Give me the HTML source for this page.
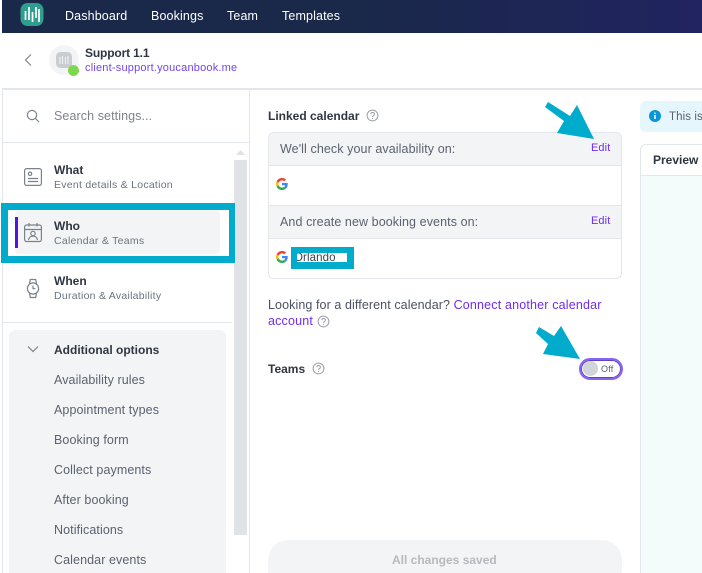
<!DOCTYPE html>
<html><head><meta charset="utf-8"><style>
html,body{margin:0;padding:0;background:#fff}
#p{position:relative;width:702px;height:573px;overflow:hidden;background:#fff;font-family:"Liberation Sans",sans-serif;color:#374151}
#p div,#p svg,#p span.a{position:absolute}
.t{white-space:nowrap;line-height:16px;font-size:12.5px;letter-spacing:.09px;transform:translateY(-8px)}
.b{font-weight:bold;font-size:12px;color:#2f3642;letter-spacing:0}
.s{font-size:10.5px;color:#6b7280;letter-spacing:.26px}
.o{color:#5b6270}
.l{color:#6f2df0;letter-spacing:.17px}
.n{color:#fff;font-size:12.5px;letter-spacing:.13px}
</style></head><body><div id="p">
<div style="left:2px;top:0;width:700px;height:33px;background:linear-gradient(90deg,#1a2849 0%,#1a2849 50%,#212460 100%)"></div>
<svg style="left:20px;top:3px" width="24" height="24" viewBox="0 0 24 24"><rect x="0.500" y="0" width="23" height="23" rx="7" fill="#2f9e8f"/><path d="M5.500 8v9M9 4v13M12.500 9v10M16 4v11M19 6v13" stroke="#fff" stroke-width="1.700" fill="none"/></svg>
<div class="t n" style="left:65px;top:16px">Dashboard</div>
<div class="t n" style="left:151px;top:16px">Bookings</div>
<div class="t n" style="left:227px;top:16px">Team</div>
<div class="t n" style="left:282px;top:16px">Templates</div>

<svg style="left:22px;top:52px" width="12" height="16" viewBox="0 0 12 16"><path d="M9 2.500L3.500 8L9 13.500" stroke="#80868f" stroke-width="1.200" fill="none"/></svg>
<div style="left:49px;top:45px;width:30px;height:30px;border-radius:50%;background:#f3f4f6"></div>
<svg style="left:56px;top:52px" width="16" height="16" viewBox="0 0 16 16"><rect width="16" height="16" rx="4.500" fill="#c9ccd0"/><path d="M4 5v7M6.500 4v8M9.500 5v7M12 4v8" stroke="#eceef0" stroke-width="1.200"/></svg>
<div style="left:68px;top:65px;width:11px;height:11px;border-radius:50%;background:#7ed84f"></div>
<div class="t b" style="left:85px;top:53px;letter-spacing:-.15px">Support 1.1</div>
<div class="t l" style="left:85px;top:68px;font-size:11px;letter-spacing:.2px;color:#7444ee">client-support.youcanbook.me</div>

<div style="left:2px;top:88px;width:700px;height:2px;background:#e3e6ea"></div>
<div style="left:2px;top:89px;width:1px;height:484px;background:#e3e6ea"></div>
<div style="left:249px;top:89px;width:1px;height:484px;background:#e3e6ea"></div>
<svg style="left:26px;top:109px" width="14" height="14" viewBox="0 0 14 14"><circle cx="6" cy="6" r="4.600" stroke="#7b828c" stroke-width="1.200" fill="none"/><path d="M9.500 9.500L13 13" stroke="#7b828c" stroke-width="1.200"/></svg>
<div class="t" style="left:54px;top:116px;color:#7e848d">Search settings...</div>
<div style="left:3px;top:142px;width:246px;height:1px;background:#e3e6ea"></div>

<div style="left:234px;top:160px;width:13px;height:375px;background:#dfe3e7"></div>
<svg style="left:236px;top:150px" width="9" height="5"><path d="M0 5L4.500 0L9 5Z" fill="#dfe3e7"/></svg>

<svg style="left:23px;top:167px" width="20" height="20" viewBox="0 0 20 20" fill="none" stroke="#7b828c" stroke-width="1.200"><rect x="1.600" y="1.600" width="16.800" height="16.800" rx="2"/><circle cx="7" cy="6.800" r="1.700"/><path d="M5 11.500h10M5 14.500h10"/></svg>
<div class="t b" style="left:54px;top:170px">What</div>
<div class="t s" style="left:54px;top:185px">Event details &amp; Location</div>

<div style="left:1px;top:203px;width:234px;height:60px;background:#00abcb"></div>
<div style="left:8px;top:210px;width:221px;height:46px;background:#fff"></div>
<div style="left:15px;top:211px;width:205px;height:43px;background:#f3f4f6;border-radius:4px"></div>
<div style="left:15px;top:217px;width:3px;height:31px;background:#4f14e8"></div>
<svg style="left:23px;top:222px" width="20" height="22" viewBox="0 0 20 22" fill="none" stroke="#7b828c" stroke-width="1.200"><rect x="1.600" y="3" width="16.800" height="16.500" rx="2"/><path d="M1.600 7.500h16.800M6 1v3.500M14 1v3.500"/><circle cx="10" cy="11.500" r="2.200"/><path d="M5.500 18c.5-3 2-3.800 4.500-3.800s4 .8 4.500 3.800"/></svg>
<div class="t b" style="left:54px;top:226px">Who</div>
<div class="t s" style="left:54px;top:241px">Calendar &amp; Teams</div>

<svg style="left:25px;top:278px" width="16" height="21" viewBox="0 0 16 21" fill="none" stroke="#7b828c" stroke-width="1.200"><circle cx="8" cy="10.500" r="5.600"/><path d="M8 7.500v3.200h2.400M4.500 5.500L5.300 1.500h5.400l.8 4M4.500 15.500l.8 4h5.400l.8-4"/></svg>
<div class="t b" style="left:54px;top:281px">When</div>
<div class="t s" style="left:54px;top:296px">Duration &amp; Availability</div>
<div style="left:3px;top:322px;width:229px;height:1px;background:#e3e6ea"></div>

<div style="left:9px;top:330px;width:217px;height:250px;background:#f3f4f6;border-radius:6px"></div>
<svg style="left:26px;top:345px" width="14" height="9" viewBox="0 0 14 9"><path d="M2 1.500L7 6.500L12 1.500" stroke="#7b828c" stroke-width="1.200" fill="none"/></svg>
<div class="t b" style="left:54px;top:350px">Additional options</div>
<div class="t o" style="left:54px;top:380px">Availability rules</div>
<div class="t o" style="left:54px;top:410px">Appointment types</div>
<div class="t o" style="left:54px;top:440px">Booking form</div>
<div class="t o" style="left:54px;top:470px">Collect payments</div>
<div class="t o" style="left:54px;top:500px">After booking</div>
<div class="t o" style="left:54px;top:530px">Notifications</div>
<div class="t o" style="left:54px;top:560px">Calendar events</div>

<div class="t b" style="left:268px;top:116px">Linked calendar</div>
<svg style="left:366px;top:109px" width="13" height="13" viewBox="0 0 13 13" fill="none" stroke="#9a9fa6"><circle cx="6.500" cy="6.500" r="5.400"/><path d="M4.800 5.200c0-2.200 3.600-2.200 3.600 0 0 1.400-1.900 1.300-1.900 2.800M6.500 9v1"/></svg>

<div style="left:268px;top:132px;width:352px;height:145px;border:1px solid #e3e6ea;border-radius:6px;overflow:hidden;background:#fff">
<div style="left:0;top:0;width:352px;height:32px;background:#f3f4f6;border-bottom:1px solid #e3e6ea"></div>
<div style="left:0;top:72px;width:352px;height:32px;background:#f3f4f6;border-top:1px solid #e3e6ea;border-bottom:1px solid #e3e6ea"></div>
</div>
<div class="t o" style="left:280px;top:149px">We'll check your availability on:</div>
<div class="t l" style="left:591px;top:148px;font-size:11px;letter-spacing:.1px">Edit</div>
<div class="t o" style="left:280px;top:222px">And create new booking events on:</div>
<div class="t l" style="left:591px;top:221px;font-size:11px;letter-spacing:.1px">Edit</div>

<svg style="left:276px;top:178px" width="12" height="12" viewBox="0 0 48 48"><path fill="#EA4335" d="M24 9.500c3.500 0 6.700 1.200 9.200 3.600l6.900-6.900C35.900 2.400 30.500 0 24 0 14.600 0 6.500 5.400 2.600 13.200l8 6.200C12.400 13.700 17.700 9.500 24 9.500z"/><path fill="#4285F4" d="M47 24.500c0-1.600-.1-3.100-.4-4.500H24v9h12.900c-.6 3-2.200 5.500-4.700 7.200l7.700 6c4.500-4.200 7.100-10.300 7.100-17.700z"/><path fill="#FBBC05" d="M10.500 28.600c-.5-1.400-.8-3-.8-4.600s.3-3.200.8-4.600l-8-6.200C.9 16.500 0 20.100 0 24s.9 7.500 2.600 10.800l7.900-6.200z"/><path fill="#34A853" d="M24 48c6.500 0 11.900-2.100 15.900-5.800l-7.700-6c-2.200 1.500-4.900 2.300-8.200 2.300-6.300 0-11.600-4.200-13.500-9.900l-8 6.200C6.500 42.600 14.600 48 24 48z"/></svg>
<svg style="left:276px;top:251px" width="12" height="12" viewBox="0 0 48 48"><path fill="#EA4335" d="M24 9.500c3.500 0 6.700 1.200 9.200 3.600l6.900-6.900C35.900 2.400 30.500 0 24 0 14.600 0 6.500 5.400 2.600 13.200l8 6.200C12.400 13.700 17.700 9.500 24 9.500z"/><path fill="#4285F4" d="M47 24.500c0-1.600-.1-3.100-.4-4.500H24v9h12.900c-.6 3-2.200 5.500-4.700 7.200l7.700 6c4.500-4.200 7.100-10.300 7.100-17.700z"/><path fill="#FBBC05" d="M10.500 28.600c-.5-1.400-.8-3-.8-4.600s.3-3.200.8-4.600l-8-6.200C.9 16.500 0 20.100 0 24s.9 7.500 2.600 10.800l7.900-6.200z"/><path fill="#34A853" d="M24 48c6.500 0 11.900-2.100 15.900-5.800l-7.700-6c-2.200 1.500-4.900 2.300-8.200 2.300-6.300 0-11.600-4.200-13.500-9.900l-8 6.200C6.500 42.600 14.600 48 24 48z"/></svg>
<div style="left:291px;top:247px;width:63px;height:22px;background:#00abcb"></div>
<div style="left:297px;top:253px;width:50px;height:9px;background:#fff;overflow:hidden">
<div class="t" style="left:-3px;top:5px;font-size:11.500px;color:#3a4250;letter-spacing:.1px">Orlando</div></div>

<div class="t" style="left:268px;top:305px;color:#4b5260">Looking for a different calendar? <span class="l">Connect another calendar</span></div>
<div class="t l" style="left:268px;top:321px">account</div>
<svg style="left:317px;top:315px" width="13" height="13" viewBox="0 0 13 13" fill="none" stroke="#9a9fa6"><circle cx="6.500" cy="6.500" r="5.400"/><path d="M4.800 5.200c0-2.200 3.600-2.200 3.600 0 0 1.400-1.900 1.300-1.900 2.800M6.500 9v1"/></svg>

<div class="t b" style="left:268px;top:369px">Teams</div>
<svg style="left:312px;top:362px" width="13" height="13" viewBox="0 0 13 13" fill="none" stroke="#9a9fa6"><circle cx="6.500" cy="6.500" r="5.400"/><path d="M4.800 5.200c0-2.200 3.600-2.200 3.600 0 0 1.400-1.900 1.300-1.900 2.800M6.500 9v1"/></svg>
<div style="left:579px;top:358px;width:40px;height:18px;border:2px solid #8a63f2;border-radius:11px;background:#fff;box-shadow:inset 0 0 0 1px #5a45c0"></div>
<div style="left:583px;top:361px;width:15px;height:15px;border-radius:50%;background:#d1d4d8"></div>
<div class="t" style="left:601px;top:369px;font-size:9px;letter-spacing:.2px;color:#5b6270">Off</div>

<svg style="left:0;top:0" width="702" height="573"><path fill="#00abcb" d="M548 102L570 116L577 105L594 139L557 133L564 121L545 107Z"/><path fill="#00abcb" d="M539 327L554 336L561 326L580 359L543 354L548 344L536 333Z"/></svg>

<div style="left:268px;top:540px;width:354px;height:50px;background:#f3f4f6;border-radius:20px"></div>
<div class="t" style="left:392px;top:560px;font-weight:bold;color:#b6b9bd;font-size:12px;letter-spacing:0">All changes saved</div>

<div style="left:640px;top:101px;width:70px;height:31px;background:#e5f6fd;border-radius:6px"></div>
<svg style="left:649px;top:110px" width="12" height="12" viewBox="0 0 12 12"><circle cx="6" cy="6" r="6" fill="#0a95d8"/><path d="M6 5v4M6 2.600v1.300" stroke="#fff" stroke-width="1.500"/></svg>
<div class="t o" style="left:669px;top:117px;font-size:11.500px">This is</div>
<div style="left:640px;top:144px;width:80px;height:440px;border:1px solid #e3e6ea;border-radius:6px;background:#fff;overflow:hidden">
<div style="left:0;top:30px;width:80px;height:420px;background:#f3fcfa;border-top:1px solid #e3e6ea"></div></div>
<div class="t b" style="left:653px;top:160px">Preview</div>
</div></body></html>
